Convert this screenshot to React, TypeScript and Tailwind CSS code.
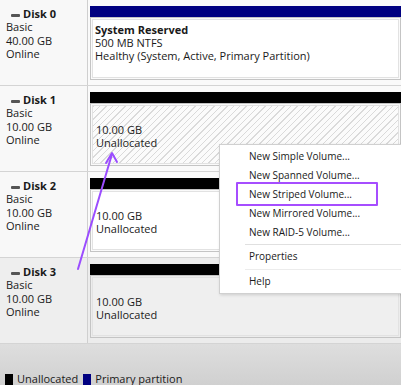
const disks = [
  { name: 'Disk 0', size: '40.00 GB', bar: 'bg-[#000080]' },
  { name: 'Disk 1', size: '10.00 GB', bar: 'bg-black' },
  { name: 'Disk 2', size: '10.00 GB', bar: 'bg-black' },
  { name: 'Disk 3', size: '10.00 GB', bar: 'bg-black' },
]

const menu = [
  'New Simple Volume...',
  'New Spanned Volume...',
  'New Striped Volume...',
  'New Mirrored Volume...',
  'New RAID-5 Volume...',
]

function DiskIcon() {
  return <span className="inline-block w-[9px] h-[3px] bg-[#555] rounded-[1px] mr-[3px] mb-[3px]" />
}

function Row({ i }: { i: number }) {
  const d = disks[i]
  const last = i === 3
  return (
    <div className={`flex h-[86px] border-b border-[#d4d4d4] ${last ? 'bg-[#ececec]' : 'bg-[#fafafa]'}`}>
      <div className={`w-[88px] shrink-0 border-r border-[#cfcfcf] pl-[6px] pt-[7px] leading-[13.3px] ${last ? 'bg-[#eeeeee]' : 'bg-[#f8f8f8]'}`}>
        <div className="font-bold flex items-end pl-[5px]">
          <DiskIcon />
          {d.name}
        </div>
        <div>Basic</div>
        <div>{d.size}</div>
        <div>Online</div>
      </div>
      <div className="flex-1 flex flex-col pt-[6px] pl-[2px]">
        <div className={`h-[11px] ${d.bar}`} />
        <div className="h-[63px] border border-[#c4c4c4] p-[1px]">
          {i === 0 ? (
            <div className="h-full border border-[#e2e2e2] bg-white pl-[2px] pt-[3px] leading-[13px]">
              <div className="font-bold">System Reserved</div>
              <div>500 MB NTFS</div>
              <div>Healthy (System, Active, Primary Partition)</div>
            </div>
          ) : (
            <div
              className={`h-full border border-[#e2e2e2] pl-[3px] pt-[17px] leading-[13px] ${
                i === 1
                  ? 'bg-[repeating-linear-gradient(135deg,#dadada_0px,#dadada_1px,#fbfbfb_1px,#fbfbfb_4.5px)]'
                  : last ? 'bg-[#efefef]' : 'bg-white'
              }`}
            >
              <div>10.00 GB</div>
              <div>Unallocated</div>
            </div>
          )}
        </div>
      </div>
    </div>
  )
}

export default function App() {
  return (
    <div
      className="relative w-[401px] h-[385px] overflow-hidden bg-[#d6d6d6] text-[11px] text-[#1a1a1a]"
      style={{ fontFamily: '"Open Sans", "Noto Sans", sans-serif' }}
    >
      {[0, 1, 2, 3].map(i => <Row key={i} i={i} />)}

      {/* legend */}
      <div className="flex items-center h-[41px] pt-[29px] pl-[5px] bg-[linear-gradient(#dedede,#d0d0d0)]">
        <span className="w-[8px] h-[11px] bg-black mr-[4px]" />
        <span className="mr-[5px]">Unallocated</span>
        <span className="w-[8px] h-[11px] bg-[#000080] mr-[4px]" />
        <span>Primary partition</span>
      </div>

      {/* context menu */}
      <div className="absolute left-[219px] top-[144px] w-[200px] h-[150px] bg-white border border-[#d0d0d0] shadow-[1px_1px_3px_rgba(0,0,0,0.15)] pt-[2px] pl-[29px] text-[10px]">
        {menu.map(m => (
          <div key={m} className="h-[19px] leading-[19px]">{m}</div>
        ))}
        <div className="h-px bg-[#e0e0e0] -ml-[4px] my-[2px]" />
        <div className="h-[19px] leading-[19px]">Properties</div>
        <div className="h-px bg-[#ececec] -ml-[4px] my-[2.5px]" />
        <div className="h-[19px] leading-[19px]">Help</div>
      </div>

      {/* highlight */}
      <div className="absolute left-[236px] top-[182px] w-[142px] h-[24px] border-[2.5px] border-[#a64dff] rounded-[1px]" />

      {/* arrow */}
      <svg className="absolute left-0 top-0" width="401" height="385">
        <path d="M78 269 L112 154" stroke="#9b4dff" strokeWidth="2" strokeLinecap="round" fill="none" />
        <path d="M106 163 L112 153 L117 162" stroke="#9b4dff" strokeWidth="2" strokeLinecap="round" strokeLinejoin="round" fill="none" />
      </svg>
    </div>
  )
}
